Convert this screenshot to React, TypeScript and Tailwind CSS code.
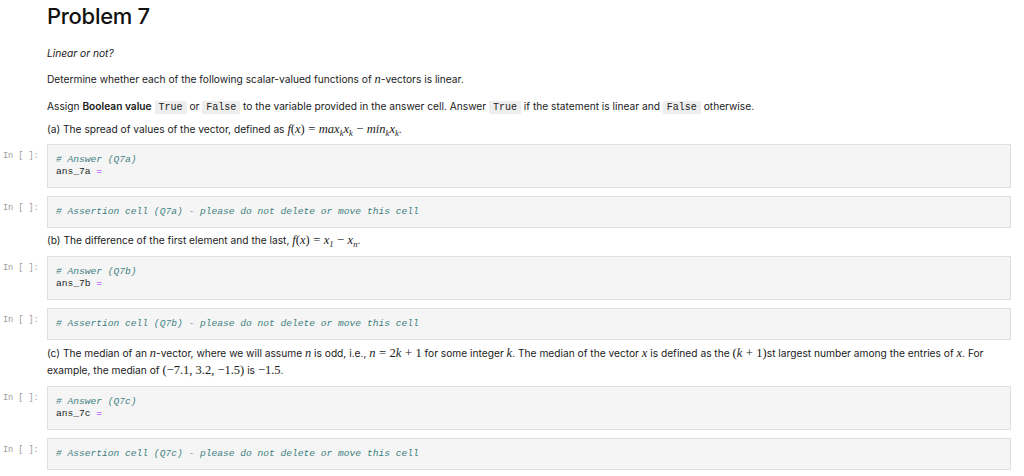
import React from "react";

const sans = { fontFamily: "Inter, 'Noto Sans', sans-serif" };

function M({ children }: { children: React.ReactNode }) {
  return (
    <span
      className="text-[12.5px] italic leading-none"
      style={{ fontFamily: "'Liberation Serif', 'DejaVu Serif', serif" }}
    >
      {children}
    </span>
  );
}
function R({ children }: { children: React.ReactNode }) {
  return <span className="not-italic">{children}</span>;
}
function Op({ children }: { children: React.ReactNode }) {
  return <span className="mx-[3.5px] not-italic">{children}</span>;
}
function Sub({ children }: { children: React.ReactNode }) {
  return <span className="relative top-[3px] text-[8.5px] leading-none">{children}</span>;
}
function C({ children }: { children: React.ReactNode }) {
  return (
    <code
      className="bg-[#eeeeee] px-[4px] py-[1px] text-[10px] text-[#222]"
      style={{ fontFamily: "'Liberation Mono', monospace" }}
    >
      {children}
    </code>
  );
}

function Cell({ comment, varName }: { comment: string; varName?: string }) {
  return (
    <div className="flex">
      <div
        className="w-[47px] shrink-0 pl-[3px] pt-[6px] text-[8.5px] leading-[12px] text-[#9a9a9a]"
        style={{ fontFamily: "'Liberation Mono', monospace" }}
      >
        In [ ]:
      </div>
      <div
        className="mr-[13px] flex-1 border border-[#e0e0e0] bg-[#f5f5f5] px-[8px] py-[9px] text-[9.6px] leading-[12px]"
        style={{ fontFamily: "'Liberation Mono', monospace" }}
      >
        <div className="italic text-[#408080]">{comment}</div>
        {varName && (
          <div className="text-[#222]">
            {varName} <span className="text-[#aa22ff]">=</span>
          </div>
        )}
      </div>
    </div>
  );
}

export default function App() {
  return (
    <div className="w-[1024px] h-[476px] overflow-hidden bg-white text-[#1a1a1a]" style={sans}>
      <div className="pl-[47px] pr-[13px]">
        <h1 className="pt-[3px] text-[22px] font-medium leading-[26px] tracking-[-0.3px] text-[#111]">Problem 7</h1>
        <p className="mt-[17px] text-[10.2px] italic leading-[14px]">Linear or not?</p>
        <p className="mt-[12px] text-[10.2px] leading-[14px]">
          Determine whether each of the following scalar-valued functions of <M>n</M>-vectors is linear.
        </p>
        <p className="mt-[12px] text-[10.2px] leading-[16px]">
          Assign <b className="font-semibold">Boolean value</b> <C>True</C> or <C>False</C> to the variable provided in the
          answer cell. Answer <C>True</C> if the statement is linear and <C>False</C> otherwise.
        </p>
        <p className="mt-[5px] text-[10.2px] leading-[16px]">
          (a) The spread of values of the vector, defined as{" "}
          <M>
            f<R>(</R>x<R>)</R>
            <Op>=</Op>max<Sub>k</Sub>x<Sub>k</Sub>
            <Op>−</Op>min<Sub>k</Sub>x<Sub>k</Sub>
          </M>
          .
        </p>
      </div>
      <div className="mt-[7px]">
        <Cell comment="# Answer (Q7a)" varName="ans_7a" />
        <div className="mt-[8px]">
          <Cell comment="# Assertion cell (Q7a) - please do not delete or move this cell" />
        </div>
      </div>
      <div className="pl-[47px] pr-[13px]">
        <p className="mt-[4px] text-[10.2px] leading-[16px]">
          (b) The difference of the first element and the last,{" "}
          <M>
            f<R>(</R>x<R>)</R>
            <Op>=</Op>x<Sub>1</Sub>
            <Op>−</Op>x<Sub>n</Sub>
          </M>
          .
        </p>
      </div>
      <div className="mt-[8px]">
        <Cell comment="# Answer (Q7b)" varName="ans_7b" />
        <div className="mt-[8px]">
          <Cell comment="# Assertion cell (Q7b) - please do not delete or move this cell" />
        </div>
      </div>
      <div className="pl-[47px] pr-[13px]">
        <p className="mt-[5px] text-[10.2px] leading-[17px]">
          (c) The median of an <M>n</M>-vector, where we will assume <M>n</M> is odd, i.e.,{" "}
          <M>
            n<Op>=</Op>
            <R>2</R>k<Op>+</Op>
            <R>1</R>
          </M>{" "}
          for some integer <M>k</M>. The median of the vector <M>x</M> is defined as the{" "}
          <M>
            <R>(</R>k<Op>+</Op>
            <R>1)</R>
          </M>
          st largest number among the entries of <M>x</M>. For example, the median of{" "}
          <M>
            <R>(−7.1, 3.2, −1.5)</R>
          </M>{" "}
          is{" "}
          <M>
            <R>−1.5</R>
          </M>
          .
        </p>
      </div>
      <div className="mt-[7px]">
        <Cell comment="# Answer (Q7c)" varName="ans_7c" />
        <div className="mt-[8px]">
          <Cell comment="# Assertion cell (Q7c) - please do not delete or move this cell" />
        </div>
      </div>
    </div>
  );
}
